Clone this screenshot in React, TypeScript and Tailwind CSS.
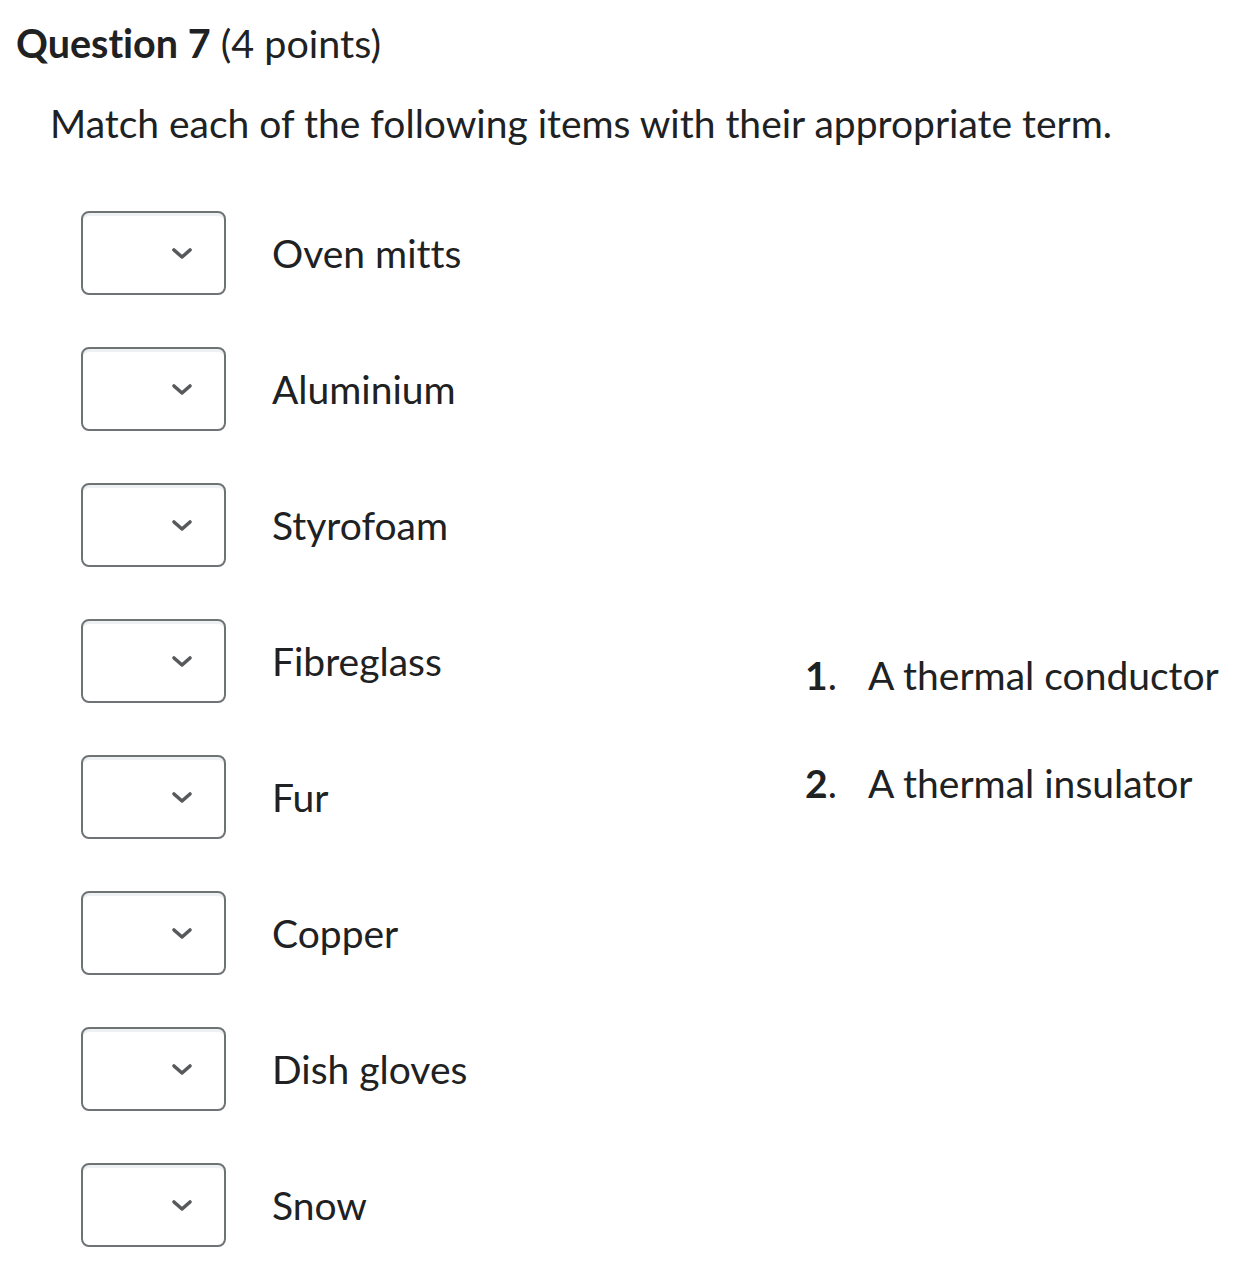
import React from "react";

const items = [
  "Oven mitts",
  "Aluminium",
  "Styrofoam",
  "Fibreglass",
  "Fur",
  "Copper",
  "Dish gloves",
  "Snow",
];

const terms = ["A thermal conductor", "A thermal insulator"];

function Chevron() {
  return (
    <svg width="22" height="13" viewBox="0 0 22 13" fill="none" className="block">
      <path
        d="M3 3 L11 10 L19 3"
        stroke="#565a5c"
        strokeWidth="3.6"
        strokeLinecap="round"
        strokeLinejoin="round"
      />
    </svg>
  );
}

function SelectBox() {
  return (
    <div className="w-[145px] h-[84px] shrink-0 rounded-[8px] border-2 border-[#6e7376] bg-white shadow-[inset_0_3px_0_#eef0f1] flex items-center justify-end pr-[31px]">
      <Chevron />
    </div>
  );
}

export default function App() {
  return (
    <div
      className="w-[1255px] h-[1282px] bg-white text-[#202122] [font-variant-ligatures:none]"
      style={{ fontFamily: "Lato, 'Noto Sans', sans-serif" }}
    >
      <div className="pl-[16px] pt-[19px] text-[39.5px] leading-[48px]">
        <span className="font-bold">Question 7</span> (4 points)
      </div>
      <div className="pl-[50px] pt-[32px] text-[39px] leading-[48px]">
        Match each of the following items with their appropriate term.
      </div>
      <div className="flex pt-[64px] pl-[81px]">
        <div className="flex flex-col gap-[52px] w-[724px]">
          {items.map((it) => (
            <div key={it} className="flex items-center">
              <SelectBox />
              <span className="ml-[46px] text-[39px] leading-[48px]">{it}</span>
            </div>
          ))}
        </div>
        <div className="flex flex-col justify-center gap-[60px]">
          {terms.map((t, i) => (
            <div key={t} className="flex items-center text-[39px] leading-[48px]">
              <span className="w-[63px] shrink-0">
                <span className="font-bold">{i + 1}</span>.
              </span>
              <span>{t}</span>
            </div>
          ))}
        </div>
      </div>
    </div>
  );
}
